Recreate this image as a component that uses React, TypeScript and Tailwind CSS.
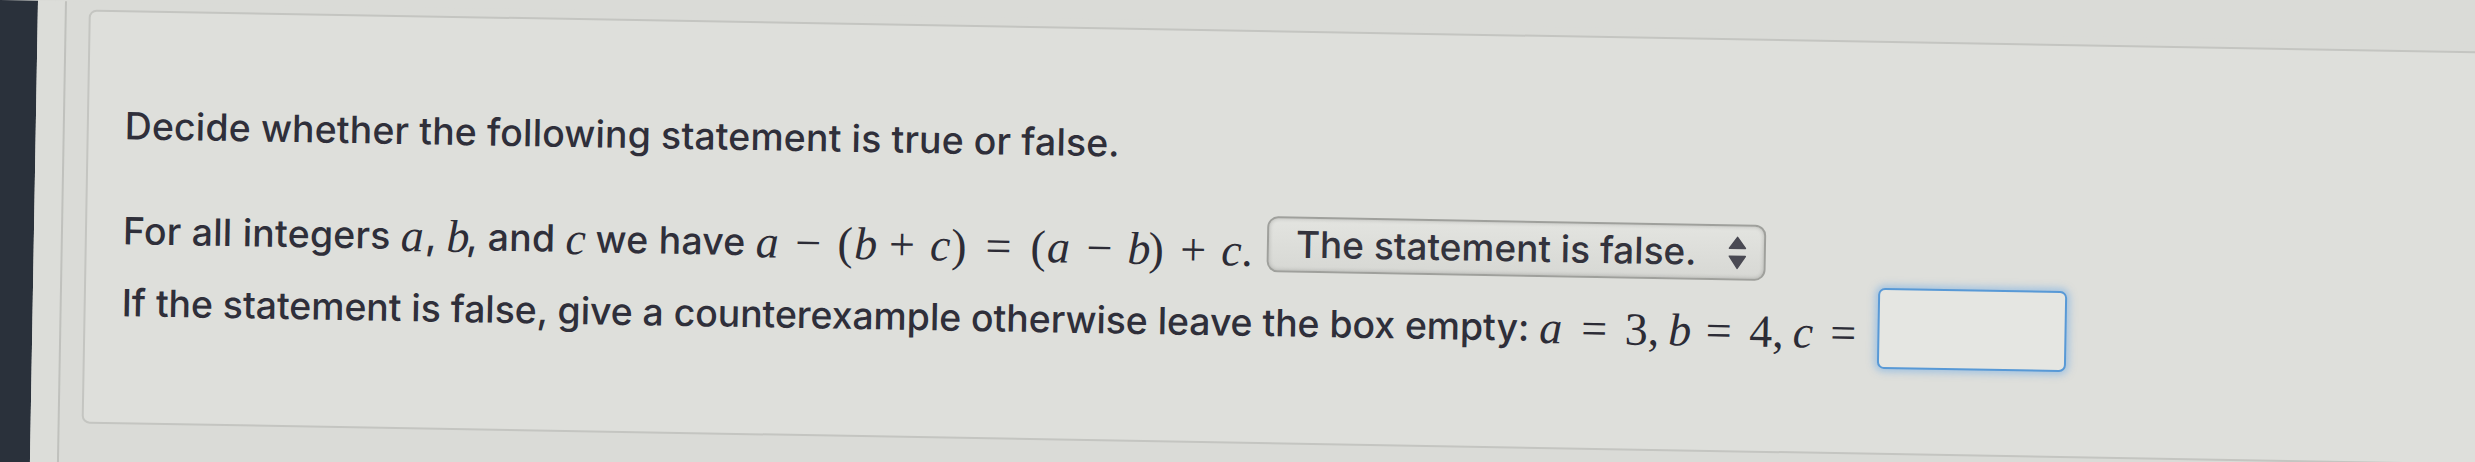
import React from "react";

const Va = () => <span className="inline-block w-[0.529em] italic">a</span>;
const Vb = () => <span className="inline-block w-[0.429em] italic">b</span>;
const Vc = () => <span className="inline-block w-[0.433em] italic">c</span>;
const Bin = ({ ch }: { ch: string }) => (
  <span className="inline-block w-[0.778em] mx-[0.222em] text-center">{ch}</span>
);
const Rel = ({ ch }: { ch: string }) => (
  <span className="inline-block w-[0.778em] mx-[0.278em] text-center">{ch}</span>
);
const Op = ({ ch }: { ch: string }) => (
  <span className="inline-block w-[0.389em] text-center">{ch}</span>
);
const Dg = ({ d }: { d: string }) => <span className="inline-block w-[0.5em]">{d}</span>;
const Cm = () => <span className="inline-block w-[0.278em] mr-[0.167em]">,</span>;

const Math = ({ children }: { children: React.ReactNode }) => (
  <span className="font-['Liberation_Serif',serif] font-normal tracking-normal text-[46px] leading-[44px] text-[#2c2c36]">
    {children}
  </span>
);

export default function App() {
  return (
    <div className="w-[2475px] h-[462px] overflow-hidden bg-[#dadbd7]">
      <div className="w-[2600px] h-[520px] flex origin-top-left rotate-[1deg] bg-[#dadbd7]">
        <div className="w-[38px] shrink-0 bg-[#2a313b]" />
        <div className="w-[29px] shrink-0 border-r-2 border-[#c0c1bd] bg-[#dcddd9]" />
        <div className="flex-1 pl-[22px] pt-[8px]">
          <div className="h-[414px] border-2 border-[#c4c5c1] rounded-[8px] bg-[#dedfdb] pl-[36px] pt-[92px] font-['Inter',sans-serif] font-medium text-[37.5px] leading-[44px] text-[#2f2f3a] whitespace-pre">
            <div className="flex items-center h-[44px]">
              <span className="tracking-[0.1px]">Decide whether the following statement is true or false.</span>
            </div>

            <div className="flex items-center h-[56px] mt-[48px]">
              <span className="flex items-center mt-[14px] tracking-[0.2px]">
                <span>For all integers </span>
                <Math>
                  <Va />
                </Math>
                <span>, </span>
                <Math>
                  <Vb />
                </Math>
                <span>, and </span>
                <Math>
                  <Vc />
                </Math>
                <span> we have </span>
                <Math>
                  <Va />
                  <Bin ch="−" />
                  <Op ch="(" />
                  <Vb />
                  <Bin ch="+" />
                  <Vc />
                  <Op ch=")" />
                  <Rel ch="=" />
                  <Op ch="(" />
                  <Va />
                  <Bin ch="−" />
                  <Vb />
                  <Op ch=")" />
                  <Bin ch="+" />
                  <Vc />
                  <span>.</span>
                </Math>
              </span>
              <div className="ml-[14px] w-[499px] h-[56px] flex items-center border-2 border-[#9fa09c] rounded-[11px] bg-linear-to-b from-[#e3e4e0] to-[#d7d8d4] shadow-[inset_0_0_4px_rgba(0,0,0,0.2)] pl-[27px] pr-[17px]">
                <span className="text-[37px] text-[#33333d]">The statement is false.</span>
                <svg className="ml-auto" width="19" height="36" viewBox="0 0 19 36">
                  <polygon points="9.5,3 1.5,14 17.5,14" fill="#4a4a53" stroke="#4a4a53" strokeWidth="1.5" strokeLinejoin="round" />
                  <polygon points="1.5,22 17.5,22 9.5,34" fill="#4a4a53" stroke="#4a4a53" strokeWidth="1.5" strokeLinejoin="round" />
                </svg>
              </div>
            </div>

            <div className="flex items-center h-[81px] mt-[5px]">
              <span className="flex items-center mt-[10px]">
                <span className="tracking-[-0.1px]">
                  If the statement is false, give a counterexample otherwise leave the box empty:{" "}
                </span>
                <Math>
                  <Va />
                  <Rel ch="=" />
                  <Dg d="3" />
                  <Cm />
                  <Vb />
                  <Rel ch="=" />
                  <Dg d="4" />
                  <Cm />
                  <Vc />
                  <Rel ch="=" />
                </Math>
              </span>
              <div className="ml-[3px] w-[189px] h-[81px] rounded-[7px] border-2 border-[#5899d6] bg-[#e5e6e2] shadow-[0_0_7px_3px_rgba(110,170,230,0.5)]" />
            </div>
          </div>
        </div>
      </div>
    </div>
  );
}
